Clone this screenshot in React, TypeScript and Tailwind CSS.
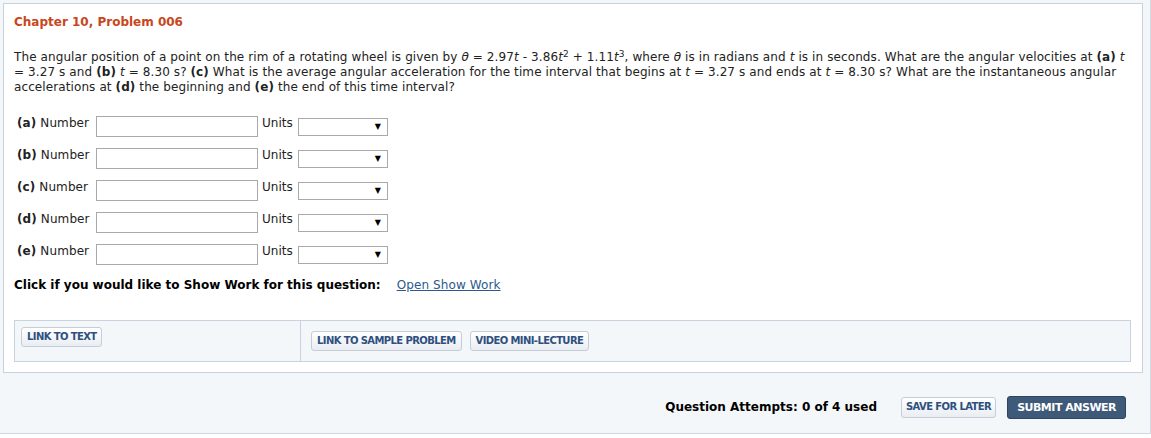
import React from 'react';

const font = { fontFamily: '"DejaVu Sans", Verdana, sans-serif' };

function UnitRow({ part }: { part: string }) {
  return (
    <div className="flex items-start h-[32px]">
      <span className="w-[82px] pl-[3px] leading-[15px] tracking-[0.1px]">
        <b>({part})</b> Number
      </span>
      <input className="w-[162px] h-[21px] border border-[#a9a9a9] bg-white" />
      <span className="ml-[4px] w-[36px] leading-[15px]">Units</span>
      <div className="mt-[2px] w-[90px] h-[18px] border border-[#a9a9a9] bg-white flex items-center justify-end pr-[6px]">
        <span className="text-[8px] leading-none text-black">▼</span>
      </div>
    </div>
  );
}

function SmallButton({ children }: { children: React.ReactNode }) {
  return (
    <button className="h-[20px] px-[5px] rounded-[3px] border border-[#c5cdd8] bg-gradient-to-b from-white to-[#e9edf2] text-[10px] font-bold uppercase tracking-[-0.6px] text-[#2f4f7f] leading-none">
      {children}
    </button>
  );
}

export default function App() {
  return (
    <div style={font} className="w-[1151px] h-[438px] bg-white text-[12px] text-[#222]">
      <div className="w-[1151px] h-[434px] bg-[#f4f7fa] border-r border-b border-[#d3d9e0] pt-[3px] pl-[3px]">
        <div className="w-[1140px] h-[370px] bg-white border border-[#c9d3df] pl-[10px] pr-[11px] pt-[10px]">
          <h1 className="text-[12px] font-bold text-[#c9461b] leading-[16px]">Chapter 10, Problem 006</h1>

          <p className="mt-[20px] leading-[15px] tracking-[0.1px]">
            The angular position of a point on the rim of a rotating wheel is given by <i>θ</i> = 2.97<i>t</i> - 3.86<i>t</i>
            <sup className="text-[9px]">2</sup> + 1.11<i>t</i>
            <sup className="text-[9px]">3</sup>, where <i>θ</i> is in radians and <i>t</i> is in seconds. What are the angular
            velocities at <b>(a)</b> <i>t</i>
            <br />= 3.27 s and <b>(b)</b> <i>t</i> = 8.30 s? <b>(c)</b> What is the average angular acceleration for the time
            interval that begins at <i>t</i> = 3.27 s and ends at <i>t</i> = 8.30 s? What are the instantaneous angular
            <br />accelerations at <b>(d)</b> the beginning and <b>(e)</b> the end of this time interval?
          </p>

          <div className="mt-[21px]">
            {['a', 'b', 'c', 'd', 'e'].map((p) => (
              <UnitRow key={p} part={p} />
            ))}
          </div>

          <div className="mt-[2px] flex items-center leading-[15px]">
            <span className="font-bold text-black">Click if you would like to Show Work for this question:</span>
            <a className="ml-[16px] text-[#2b5a8c] underline tracking-[0.1px]">Open Show Work</a>
          </div>

          <div className="mt-[27px] h-[42px] flex border border-[#c9d3df] bg-[#f4f7fa]">
            <div className="w-[286px] border-r border-[#c9d3df] pl-[6px] pt-[6px]">
              <SmallButton>Link to Text</SmallButton>
            </div>
            <div className="flex-1 flex items-center gap-[8px] pl-[10px]">
              <SmallButton>Link to Sample Problem</SmallButton>
              <SmallButton>Video Mini-Lecture</SmallButton>
            </div>
          </div>
        </div>

        <div className="flex items-center justify-end pr-[24px] mt-[22px] h-[24px]">
          <span className="font-bold text-black mr-[24px]">Question Attempts: 0 of 4 used</span>
          <button className="h-[21px] px-[4px] rounded-[3px] border border-[#c5cdd8] bg-gradient-to-b from-white to-[#e9edf2] text-[10px] font-bold tracking-[-0.6px] text-[#2f4f7f] leading-none">
            SAVE FOR LATER
          </button>
          <button className="ml-[11px] h-[23px] px-[9px] rounded-[3px] border border-[#2c4560] bg-[#3e5a78] text-[11px] font-bold tracking-[-0.5px] text-white leading-none">
            SUBMIT ANSWER
          </button>
        </div>
      </div>
    </div>
  );
}
